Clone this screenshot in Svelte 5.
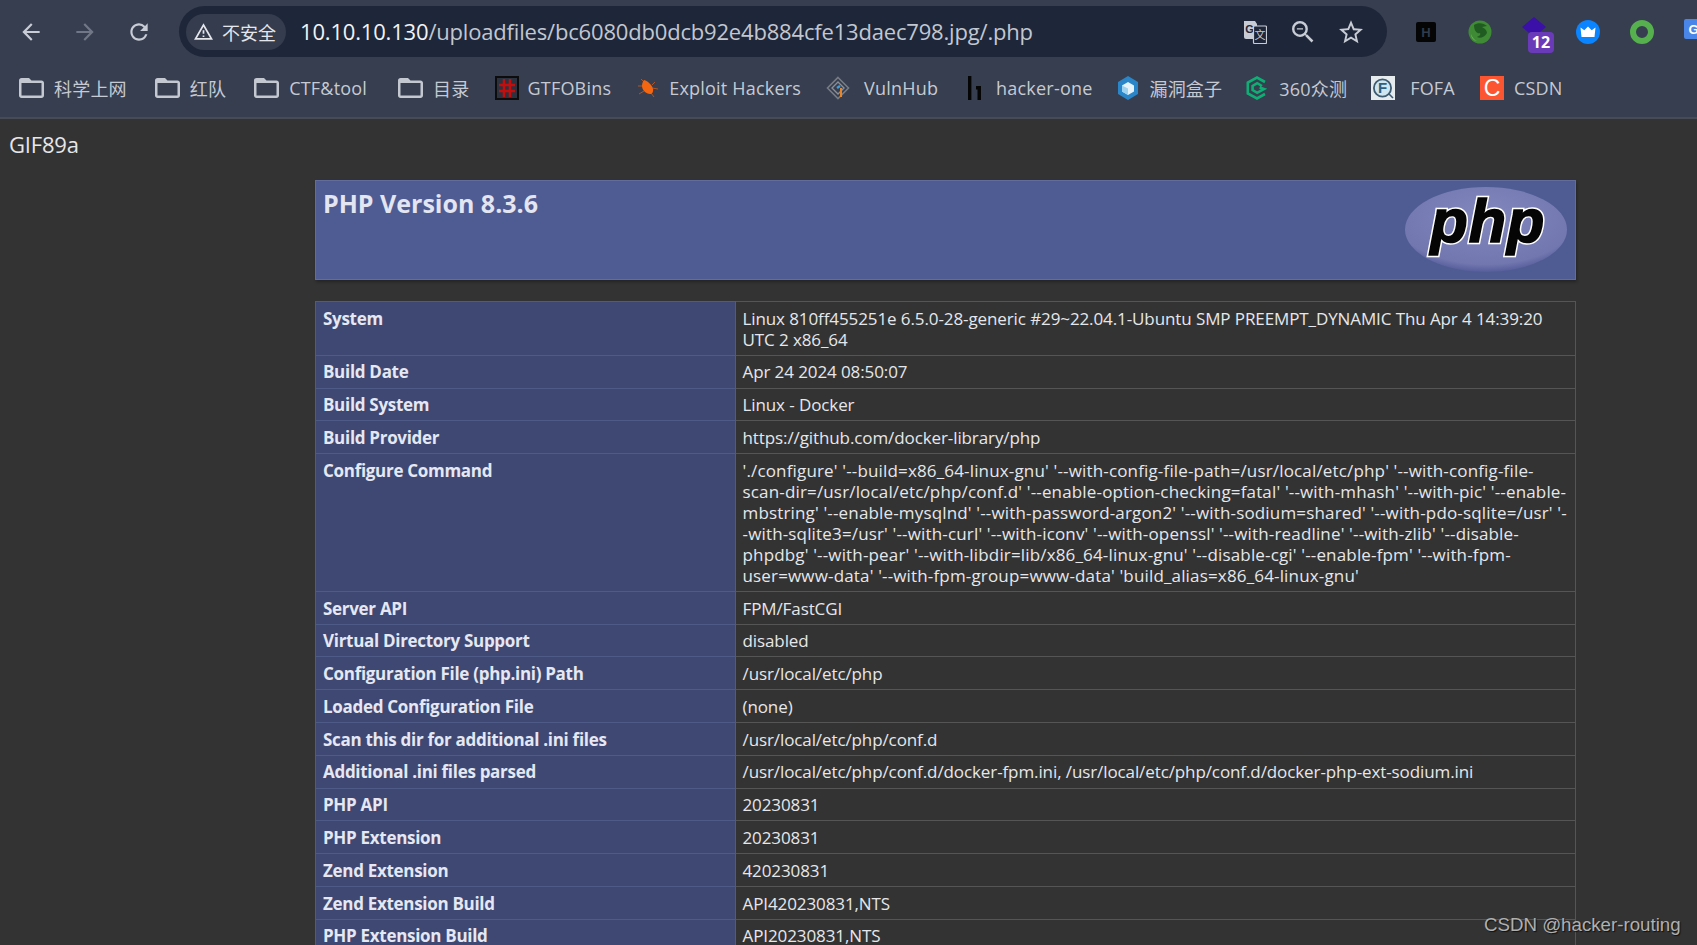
<script lang="ts">
  const bookmarks = [
    { icon: 'folder', label: '科学上网' },
    { icon: 'folder', label: '红队' },
    { icon: 'folder', label: 'CTF&tool' },
    { icon: 'folder', label: '目录' },
    { icon: 'gtfo', label: 'GTFOBins' },
    { icon: 'bug', label: 'Exploit Hackers' },
    { icon: 'vuln', label: 'VulnHub' },
    { icon: 'h1', label: 'hacker-one' },
    { icon: 'box', label: '漏洞盒子' },
    { icon: 'c360', label: '360众测' },
    { icon: 'fofa', label: 'FOFA' },
    { icon: 'csdn', label: 'CSDN' }
  ];

  // line breaks kept as phpinfo wrapped them at this window size
  const configure = [
    "'./configure' '--build=x86_64-linux-gnu' '--with-config-file-path=/usr/local/etc/php' '--with-config-file-",
    "scan-dir=/usr/local/etc/php/conf.d' '--enable-option-checking=fatal' '--with-mhash' '--with-pic' '--enable-",
    "mbstring' '--enable-mysqlnd' '--with-password-argon2' '--with-sodium=shared' '--with-pdo-sqlite=/usr' '-",
    "-with-sqlite3=/usr' '--with-curl' '--with-iconv' '--with-openssl' '--with-readline' '--with-zlib' '--disable-",
    "phpdbg' '--with-pear' '--with-libdir=lib/x86_64-linux-gnu' '--disable-cgi' '--enable-fpm' '--with-fpm-",
    "user=www-data' '--with-fpm-group=www-data' 'build_alias=x86_64-linux-gnu'"
  ].join('\n');

  const rows = [
    ['System', 'Linux 810ff455251e 6.5.0-28-generic #29~22.04.1-Ubuntu SMP PREEMPT_DYNAMIC Thu Apr 4 14:39:20 UTC 2 x86_64'],
    ['Build Date', 'Apr 24 2024 08:50:07'],
    ['Build System', 'Linux - Docker'],
    ['Build Provider', 'https://github.com/docker-library/php'],
    ['Configure Command', configure],
    ['Server API', 'FPM/FastCGI'],
    ['Virtual Directory Support', 'disabled'],
    ['Configuration File (php.ini) Path', '/usr/local/etc/php'],
    ['Loaded Configuration File', '(none)'],
    ['Scan this dir for additional .ini files', '/usr/local/etc/php/conf.d'],
    ['Additional .ini files parsed', '/usr/local/etc/php/conf.d/docker-fpm.ini, /usr/local/etc/php/conf.d/docker-php-ext-sodium.ini'],
    ['PHP API', '20230831'],
    ['PHP Extension', '20230831'],
    ['Zend Extension', '420230831'],
    ['Zend Extension Build', 'API420230831,NTS'],
    ['PHP Extension Build', 'API20230831,NTS']
  ];
</script>

{#snippet favicon(name)}
  {#if name === 'folder'}
    <svg class="fav folder-mark" viewBox="2 4 20 16"><path fill="#c4c8d1" d="M20 6h-8l-2-2H4c-1.1 0-1.99.9-1.99 2L2 18c0 1.1.9 2 2 2h16c1.1 0 2-.9 2-2V8c0-1.1-.9-2-2-2zm0 12H4V8h16v10z"/></svg>
  {:else if name === 'gtfo'}
    <svg class="fav" viewBox="0 0 24 24">
      <rect width="24" height="24" fill="#0c0c0c"/>
      <rect x="2" y="2" width="20" height="20" fill="#2c3240"/>
      <path stroke="#c40d0d" stroke-width="2.6" fill="none" d="M9 3v18M15 3v18M4 9h16M4 15h16"/>
    </svg>
  {:else if name === 'bug'}
    <svg class="fav" viewBox="0 0 24 24">
      <path stroke="#a8562a" stroke-width="1" fill="none" d="M5 3l5 5M2 10h6M3 18l5-3M19 6l-3 3M22 13l-6-1M18 21l-3-4"/>
      <path fill="#f4660f" d="M8 4c4 1 8 5 9 9 .5 3-1 5-3 5-4 0-8-4-8-8 0-2 .5-4 2-6z"/>
    </svg>
  {:else if name === 'vuln'}
    <svg class="fav" viewBox="0 0 24 24">
      <path fill="none" stroke="#777c84" stroke-width="1.6" d="M12 1.5 22.5 12 12 22.5 1.5 12z"/>
      <path fill="none" stroke="#8b8f96" stroke-width="1.4" d="M12 6l6 6-6 6-6-6z"/>
      <path stroke="#e8862a" stroke-width="2" d="M15 12v9"/>
      <path stroke="#3d9fdd" stroke-width="2.4" d="M11 12l3-2"/>
    </svg>
  {:else if name === 'h1'}
    <svg class="fav h1-mark" viewBox="0 0 14 24">
      <rect x="0" y="0" width="3.4" height="24" fill="#050505"/>
      <path fill="#050505" d="M8 10h5v14H9.5V13.5H8z"/>
    </svg>
  {:else if name === 'box'}
    <svg class="fav box-mark" viewBox="2 0 20 24" preserveAspectRatio="none">
      <path fill="#2a86c8" d="M12 0l10 6v12l-10 6-10-6V6z"/>
      <path fill="#e6f3fb" d="M12 6l6 3.4v6L12 19l-6-3.6v-6z"/>
      <path fill="#9fd2ee" d="M12 12.6V19l-6-3.6v-6z"/>
    </svg>
  {:else if name === 'c360'}
    <svg class="fav" viewBox="0 0 24 24">
      <path fill="none" stroke="#0fae74" stroke-width="2.6" d="M20 6 12 1.6 2.8 6.6v10.8L12 22.4l8-4.4"/>
      <path fill="none" stroke="#0fae74" stroke-width="2.6" d="M17 10l-4.8-2.8L7.6 10v4l4.6 2.8 6.8-3.8-4.4-1.4"/>
    </svg>
  {:else if name === 'fofa'}
    <svg class="fav" viewBox="0 0 24 24">
      <rect width="24" height="24" fill="#e6ebee"/>
      <circle cx="11.5" cy="12" r="8.6" fill="#cfe6f0" stroke="#3c5a70" stroke-width="1.8"/>
      <text x="11.5" y="17" class="fofa-f">F</text>
      <path stroke="#3c5a70" stroke-width="1.6" d="M18 18l4 4"/>
    </svg>
  {:else if name === 'csdn'}
    <svg class="fav" viewBox="0 0 24 24">
      <rect width="24" height="24" fill="#fc5531"/>
      <text x="12" y="20" class="csdn-c">C</text>
    </svg>
  {/if}
{/snippet}

<div class="browser">
  <header class="chrome">
    <div class="topbar">
      <div class="navs">
        <button class="nav" aria-label="Back"><svg viewBox="0 0 24 24"><path fill="#c8ccd6" d="M20 11H7.83l5.59-5.59L12 4l-8 8 8 8 1.41-1.41L7.83 13H20v-2z"/></svg></button>
        <button class="nav" aria-label="Forward"><svg viewBox="0 0 24 24"><path fill="#717786" d="M4 11h12.17l-5.59-5.59L12 4l8 8-8 8-1.41-1.41L16.17 13H4v-2z"/></svg></button>
        <button class="nav" aria-label="Reload"><svg viewBox="0 0 24 24"><path fill="#c8ccd6" d="M17.65 6.35A7.958 7.958 0 0 0 12 4c-4.42 0-7.99 3.58-7.99 8s3.57 8 7.99 8c3.73 0 6.84-2.55 7.73-6h-2.08A5.99 5.99 0 0 1 12 18c-3.31 0-6-2.69-6-6s2.69-6 6-6c1.66 0 3.14.69 4.22 1.78L13 11h7V4l-2.35 2.35z"/></svg></button>
      </div>

      <div class="omnibox">
        <div class="chip">
          <svg viewBox="1 2 22 19"><path fill="#e4e6eb" d="M12 5.99L19.53 19H4.47L12 5.99M12 2L1 21h22L12 2zm1 14h-2v2h2v-2zm0-6h-2v4h2v-4z"/></svg>
          <span>不安全</span>
        </div>
        <div class="url"><span class="host">10.10.10.130</span>/uploadfiles/bc6080db0dcb92e4b884cfe13daec798.jpg/.php</div>
        <div class="omni-actions">
          <span class="omni-act">
            <svg viewBox="0 0 24 24" class="translate">
              <path fill="#c8ccd4" d="M1 1h11l2 3v15H3a2 2 0 0 1-2-2z"/>
              <text x="6.5" y="13" class="tr-g">G</text>
              <rect x="10.5" y="6" width="13" height="17.5" rx="1" fill="#1e2639" stroke="#c8ccd4" stroke-width="1.2"/>
              <text x="17" y="18.5" class="tr-x">文</text>
            </svg>
          </span>
          <span class="omni-act">
            <svg viewBox="3 3 18 18" class="zoomer"><path fill="#c8ccd4" d="M15.5 14h-.79l-.28-.27A6.471 6.471 0 0 0 16 9.5 6.5 6.5 0 1 0 9.5 16c1.61 0 3.09-.59 4.23-1.57l.27.28v.79l5 4.99L20.49 19l-4.99-5zm-6 0C7.01 14 5 11.99 5 9.5S7.01 5 9.5 5 14 7.01 14 9.5 11.99 14 9.5 14zM7 9h5v1H7z"/></svg>
          </span>
          <span class="omni-act">
            <svg viewBox="2 2 20 19.4" class="star"><path fill="#c8ccd4" d="M22 9.24l-7.19-.62L12 2 9.19 8.63 2 9.24l5.46 4.73L5.82 21 12 17.27 18.18 21l-1.63-7.03L22 9.24zM12 15.4l-3.76 2.27 1-4.28-3.32-2.88 4.38-.38L12 6.1l1.71 4.04 4.38.38-3.32 2.88 1 4.28L12 15.4z"/></svg>
          </span>
        </div>
      </div>

      <div class="extensions">
        <span class="ext">
          <svg viewBox="0 0 20 20" class="e-h"><rect width="20" height="20" rx="2" fill="#050505"/><text x="10" y="15" class="h-mark">H</text></svg>
        </span>
        <span class="ext">
          <svg viewBox="0 0 24 24" class="e-24">
            <circle cx="12" cy="12" r="11.5" fill="#3f8a35"/>
            <path fill="#205c22" d="M6 5c4-3 10-2 13 1-2 0-3 1-5 1 2 1 5 3 5 6-2 4-7 6-10 4 2-1 4-2 3-4-2 1-6-1-6-8z"/>
            <path fill="#6db85c" d="M3 14c1 3 3 6 6 7-3 0-6-3-6-7z"/>
          </svg>
        </span>
        <span class="ext">
          <svg viewBox="0 0 24 24" class="e-24 purple"><path fill="#3b10a8" d="M12 0l12 10-12 10L0 10z"/></svg>
          <span class="badge">12</span>
        </span>
        <span class="ext">
          <svg viewBox="0 0 24 24" class="e-24">
            <circle cx="12" cy="12" r="12" fill="#0a84ff"/>
            <path fill="#fff" d="M4.5 7.5l3.8 2.8L12 6.5l3.7 3.8 3.8-2.8-1 9.5H5.5z"/>
          </svg>
        </span>
        <span class="ext">
          <svg viewBox="0 0 24 24" class="e-24"><circle cx="12" cy="12" r="9" fill="none" stroke="#55b04d" stroke-width="6"/></svg>
        </span>
        <span class="ext">
          <svg viewBox="0 0 24 20" class="e-g"><rect width="24" height="20" rx="2" fill="#4a85e8"/><text x="9.5" y="14.5" class="g-mark">G</text></svg>
        </span>
      </div>
    </div>

    <nav class="bookmarks">
      {#each bookmarks as b}
        <span class="bookmark {b.icon}">
          {@render favicon(b.icon)}
          <span class="bm-label">{b.label}</span>
        </span>
      {/each}
    </nav>
  </header>

  <main class="page">
    <div class="gif">GIF89a</div>
    <div class="info">
      <div class="php-head">
        <h1>PHP Version 8.3.6</h1>
        <svg class="php-logo" viewBox="0 0 162 85" role="img" aria-label="PHP logo">
          <defs>
            <radialGradient id="phpfill" cx="0.5" cy="0.35" r="0.7">
              <stop offset="0" stop-color="#8287bd"/>
              <stop offset="0.8" stop-color="#7277b0"/>
              <stop offset="1" stop-color="#474f8e"/>
            </radialGradient>
          </defs>
          <ellipse cx="81" cy="42.5" rx="81" ry="42.5" fill="url(#phpfill)"/>
          <text x="83" y="55" class="php-word php-outline">php</text>
          <text x="83" y="55" class="php-word">php</text>
        </svg>
      </div>

      <table>
        <colgroup><col class="col-key" /><col /></colgroup>
        <tbody>
          {#each rows as [key, value]}
            <tr>
              <th>{key}</th>
              <td class:configure={key === 'Configure Command'}>{value}</td>
            </tr>
          {/each}
        </tbody>
      </table>
    </div>
  </main>

  <div class="watermark">CSDN @hacker-routing</div>
</div>

<style>
  :global(body) {
    margin: 0;
    background: #333333;
    overflow: hidden;
  }

  .browser {
    position: relative;
    width: 1697px;
    height: 945px;
    overflow: hidden;
    font-family: "Open Sans", "Noto Sans CJK SC", sans-serif;
  }

  .chrome {
    background: #363e50;
    border-bottom: 2px solid #474b55;
  }

  .topbar {
    display: flex;
    align-items: center;
    height: 63px;
    box-sizing: border-box;
    padding: 6px 0 6px 4px;
  }

  .navs { display: flex; }

  .nav {
    width: 54px;
    height: 51px;
    padding: 0;
    border: 0;
    background: transparent;
    display: flex;
    align-items: center;
    justify-content: center;
  }
  .nav svg { width: 26px; height: 26px; }

  .omnibox {
    margin-left: 13px;
    width: 1208px;
    height: 51px;
    flex: none;
    box-sizing: border-box;
    padding: 0 12px 0 7px;
    display: flex;
    align-items: center;
    border-radius: 26px;
    background: #1e2639;
  }

  .chip {
    width: 100px;
    height: 36px;
    box-sizing: border-box;
    padding-left: 8px;
    display: flex;
    align-items: center;
    gap: 9px;
    border-radius: 18px;
    background: #343c4e;
    color: #e4e6eb;
    font-size: 18px;
  }
  .chip svg { width: 19px; height: 17px; }

  .url {
    margin: -2px 0 0 14px;
    font-size: 22px;
    letter-spacing: -0.18px;
    color: #c3c7d0;
    white-space: nowrap;
  }
  .host { color: #f2f3f5; }

  .omni-actions { display: flex; margin-left: auto; }
  .omni-act {
    width: 48px;
    display: flex;
    align-items: center;
    justify-content: center;
  }
  .translate { width: 24px; height: 24px; }
  .zoomer { width: 22px; height: 22px; }
  .star { width: 24px; height: 24px; }

  .tr-g {
    font: 700 11px "Liberation Sans", sans-serif;
    fill: #1e2639;
    text-anchor: middle;
  }
  .tr-x {
    font: 400 11px "Noto Sans CJK SC", sans-serif;
    fill: #c8ccd4;
    text-anchor: middle;
  }

  .extensions {
    display: flex;
    margin-left: 12px;
  }
  .ext {
    position: relative;
    width: 54px;
    height: 51px;
    flex: none;
    display: flex;
    align-items: center;
    justify-content: center;
  }
  .e-h { width: 20px; height: 20px; }
  .e-24 { width: 24px; height: 24px; }
  .e-g { width: 24px; height: 20px; margin-top: -5px; }
  .purple { margin-top: -5px; }
  .h-mark {
    font: 700 13px "Liberation Sans", sans-serif;
    fill: #2f3a4b;
    text-anchor: middle;
  }
  .g-mark {
    font: 700 13px "Liberation Sans", sans-serif;
    fill: #fff;
    text-anchor: middle;
  }
  .badge {
    position: absolute;
    left: 21px;
    top: 26px;
    width: 26px;
    height: 21px;
    border-radius: 4px;
    background: #6a3bb8;
    color: #fff;
    font-size: 16px;
    font-weight: 700;
    line-height: 21px;
    text-align: center;
  }

  .bookmarks {
    display: flex;
    align-items: center;
    height: 54px;
    box-sizing: border-box;
    padding: 0 0 4px 19px;
    gap: 28px;
    white-space: nowrap;
  }
  .bookmark {
    display: flex;
    align-items: center;
    gap: 10px;
    flex: none;
  }
  .bm-label {
    font-size: 18px;
    letter-spacing: 0.2px;
    color: #c6cad3;
  }
  .bookmark.folder:nth-child(4) { margin-left: 3px; }
  .bookmark.gtfo { margin-left: -3px; gap: 9px; }
  .bookmark.bug { margin-left: -3px; gap: 9px; }
  .bookmark.vuln { margin-left: -3px; gap: 14px; }
  .bookmark.h1 { margin-left: 2px; gap: 14px; }
  .bookmark.box { margin-left: -2px; gap: 11px; }
  .bookmark.c360 { margin-left: -5px; gap: 10px; }
  .bookmark.fofa { margin-left: -4px; gap: 15px; }
  .bookmark.csdn { margin-left: -3px; gap: 10px; }

  .fav { width: 24px; height: 24px; flex: none; display: block; }
  .folder-mark { width: 25px; height: 20px; }
  .h1-mark { width: 14px; height: 24px; }
  .box-mark { width: 20px; height: 24px; }
  .fofa-f {
    font: 700 15px "Liberation Sans", sans-serif;
    fill: #2f5f80;
    text-anchor: middle;
  }
  .csdn-c {
    font: 400 23px "Liberation Sans", sans-serif;
    fill: #fff;
    text-anchor: middle;
  }

  .page { color: #e6e7ea; }

  .gif {
    padding: 11px 0 0 9px;
    font-size: 22px;
    line-height: 28px;
    letter-spacing: -0.2px;
  }

  .info {
    margin: 22px 0 0 315px;
    width: 1261px;
  }

  .php-head {
    display: flex;
    justify-content: space-between;
    box-sizing: border-box;
    height: 100px;
    padding: 5px 8px 7px 7px;
    border: 1px solid #636d9d;
    background: #4f5b93;
    box-shadow: 1px 2px 3px rgba(0, 0, 0, 0.3);
  }

  h1 {
    margin: 0;
    font-size: 25px;
    font-weight: 700;
    line-height: 34px;
    color: #e3e5f1;
  }

  .php-logo { width: 162px; height: 85px; flex: none; margin-top: 1px; overflow: visible; }
  .php-word {
    font: italic 700 61px "Liberation Sans", sans-serif;
    letter-spacing: 1px;
    fill: #050505;
    stroke: #050505;
    stroke-width: 1.6px;
    text-anchor: middle;
  }
  .php-outline {
    stroke: #fff;
    stroke-width: 4.5px;
  }

  table {
    width: 100%;
    margin-top: 21px;
    table-layout: fixed;
    border-collapse: collapse;
  }
  .col-key { width: 420px; }

  th, td {
    padding: 5.6px 6.5px 5.2px;
    font-size: 17px;
    line-height: 21px;
    vertical-align: top;
    text-align: left;
  }
  th {
    border: 1px solid #4f5b87;
    background: #3e4873;
    color: #e5e7f2;
    font-weight: 700;
    letter-spacing: -0.3px;
    padding-left: 7px;
  }
  td {
    border: 1px solid #555555;
    background: #333333;
    color: #e6e7ea;
    letter-spacing: -0.1px;
    overflow-wrap: break-word;
  }
  td.configure {
    white-space: pre-line;
    letter-spacing: 0.16px;
  }

  .watermark {
    position: absolute;
    left: 1484px;
    top: 914px;
    font: 18.7px/22px "Liberation Sans", sans-serif;
    color: #b0b0b0;
    text-shadow: 1px 1px 1px #111;
    white-space: nowrap;
  }
</style>
